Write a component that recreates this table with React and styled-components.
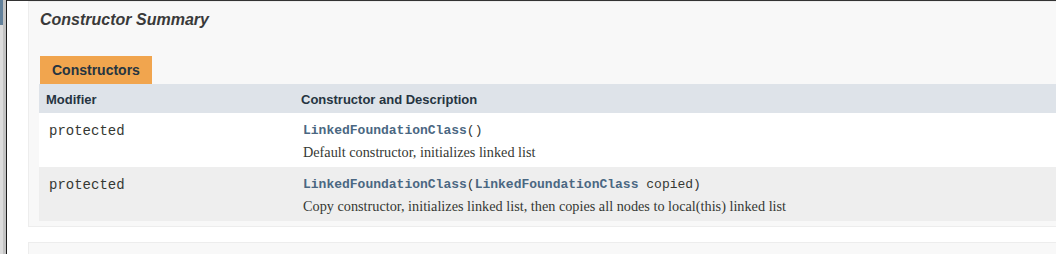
import React from 'react';
import styled, { createGlobalStyle } from 'styled-components';

const GlobalStyle = createGlobalStyle`
  html, body {
    margin: 0;
    padding: 0;
    background: #fff;
  }
  body {
    font-family: "Liberation Sans", Arial, Helvetica, sans-serif;
    font-size: 14px;
    color: #353833;
  }
`;

const constructors = [
  {
    modifier: 'protected',
    name: 'LinkedFoundationClass',
    params: null,
    description: 'Default constructor, initializes linked list',
  },
  {
    modifier: 'protected',
    name: 'LinkedFoundationClass',
    params: { type: 'LinkedFoundationClass', name: 'copied' },
    description:
      'Copy constructor, initializes linked list, then copies all nodes to local(this) linked list',
  },
];

function App() {
  return (
    <>
      <GlobalStyle />
      <Frame>
        <SideEdge>
          <Track>
            <Thumb />
          </Track>
          <Gutter />
        </SideEdge>
        <Main>
          <Block>
            <Heading>Constructor Summary</Heading>
            <Caption>Constructors</Caption>
            <Table>
              <thead>
                <tr>
                  <HeadCell $first>Modifier</HeadCell>
                  <HeadCell>Constructor and Description</HeadCell>
                </tr>
              </thead>
              <tbody>
                {constructors.map((c, i) => (
                  <Row key={i} $alt={i % 2 === 1}>
                    <ModifierCell>
                      <Code>{c.modifier}</Code>
                    </ModifierCell>
                    <MemberCell>
                      <Signature>
                        <MemberLink>{c.name}</MemberLink>(
                        {c.params && (
                          <>
                            <MemberLink>{c.params.type}</MemberLink> {c.params.name}
                          </>
                        )}
                        )
                      </Signature>
                      <Description>{c.description}</Description>
                    </MemberCell>
                  </Row>
                ))}
              </tbody>
            </Table>
          </Block>
          <Block $tall />
        </Main>
      </Frame>
    </>
  );
}

export default App;

const Frame = styled.div`
  display: flex;
  height: 254px;
  overflow: hidden;
`;

const SideEdge = styled.div`
  display: flex;
  width: 6px;
  flex-shrink: 0;
  border-right: 1px solid #1c1c1c;
`;

const Track = styled.div`
  width: 3px;
  background: #dcdcdc;
`;

const Thumb = styled.div`
  height: 25px;
  background: #62819b;
`;

const Gutter = styled.div`
  width: 3px;
  background: #c3c3c3;
`;

const Main = styled.div`
  flex: 1;
  min-width: 0;
  overflow: hidden;
  border-top: 1px solid #333;
  padding-left: 21px;
`;

const Block = styled.div`
  width: 1100px;
  box-sizing: border-box;
  border: 1px solid #ededed;
  background: #f8f8f8;
  padding: 0 20px 5px 10px;
  margin-bottom: 15px;
  height: ${p => (p.$tall ? '40px' : 'auto')};
`;

const Heading = styled.h3`
  margin: 7px 0 25px 1px;
  font-size: 16px;
  line-height: 22px;
  font-style: italic;
  font-weight: bold;
  color: #3a3a3a;
`;

const Caption = styled.div`
  display: inline-block;
  vertical-align: top;
  margin-left: 1px;
  padding: 4px 12px 4px 12px;
  line-height: 20px;
  font-size: 14px;
  font-weight: bold;
  color: #253441;
  background: #f1a54e;
`;

const Table = styled.table`
  display: table;
  width: 100%;
  border-collapse: collapse;
  border-spacing: 0;
`;

const HeadCell = styled.th`
  width: ${p => (p.$first ? '255px' : 'auto')};
  box-sizing: border-box;
  padding: 7px 3px 4px 7px;
  line-height: 18px;
  font-size: 13px;
  font-weight: bold;
  text-align: left;
  color: #253441;
  background: #dee3e9;
`;

const Row = styled.tr`
  background: ${p => (p.$alt ? '#eeeeee' : '#ffffff')};
`;

const ModifierCell = styled.td`
  vertical-align: top;
  padding: 8px 0 3px 10px;
  line-height: 19px;
`;

const MemberCell = styled.td`
  vertical-align: top;
  padding: 8px 0 3px 9px;
`;

const Code = styled.code`
  font-family: "Liberation Mono", "Courier New", monospace;
  font-size: 14px;
  color: #353833;
`;

const Signature = styled.div`
  font-family: "Liberation Mono", "Courier New", monospace;
  font-size: 13px;
  line-height: 19px;
  color: #353833;
  white-space: nowrap;
`;

const MemberLink = styled.span`
  font-weight: bold;
  color: #4a6782;
`;

const Description = styled.div`
  margin: 3px 10px 2px 0;
  font-family: "Liberation Serif", "Times New Roman", Times, serif;
  font-size: 14.25px;
  line-height: 19px;
  color: #353833;
`;
